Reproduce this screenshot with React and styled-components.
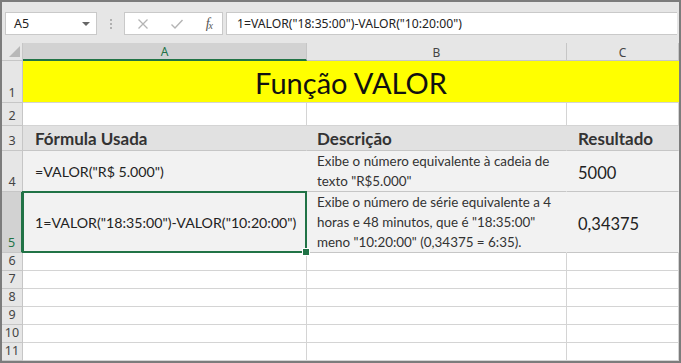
import React from 'react';
import styled, { createGlobalStyle, css } from 'styled-components';

const GlobalStyle = createGlobalStyle`
  html, body { margin: 0; padding: 0; background: #ffffff; }
  * { box-sizing: border-box; }
`;

const GREEN = '#217346';
const GRID = '#d4d4d4';

const rows = [
  { n: 1, h: 42 },
  { n: 2, h: 23 },
  { n: 3, h: 25 },
  { n: 4, h: 41 },
  { n: 5, h: 61, active: true },
  { n: 6, h: 18 },
  { n: 7, h: 18 },
  { n: 8, h: 18 },
  { n: 9, h: 18 },
  { n: 10, h: 18 },
  { n: 11, h: 18 },
];

const App = () => (
  <>
    <GlobalStyle />
    <Window>
      <FormulaBar>
        <NameBox>
          <span>A5</span>
          <DropArrow />
        </NameBox>
        <Grip>
          <i /><i /><i />
        </Grip>
        <ActionBox>
          <svg width="12" height="12" viewBox="0 0 12 12">
            <path d="M1.5 1.5 L10.5 10.5 M10.5 1.5 L1.5 10.5" stroke="#b4b4b4" strokeWidth="1.3" fill="none" />
          </svg>
          <svg width="14" height="12" viewBox="0 0 14 12">
            <path d="M1.5 6.5 L5 10 L12.5 2" stroke="#b4b4b4" strokeWidth="1.4" fill="none" />
          </svg>
          <Fx>f<sub>x</sub></Fx>
        </ActionBox>
        <FormulaInput>1=VALOR("18:35:00")-VALOR("10:20:00")</FormulaInput>
      </FormulaBar>

      <Sheet>
        <Corner>
          <svg width="11" height="11" viewBox="0 0 11 11">
            <path d="M11 0 L11 11 L0 11 Z" fill="#b8b8b8" />
          </svg>
        </Corner>
        <ColHead $active>A</ColHead>
        <ColHead>B</ColHead>
        <ColHead>C</ColHead>

        {rows.map((r) => (
          <React.Fragment key={r.n}>
            <RowHead $h={r.h} $active={r.active}>{r.n}</RowHead>
            {r.n === 1 && <TitleCell>Função VALOR</TitleCell>}
            {r.n === 2 && (<><Cell /><Cell /><Cell /></>)}
            {r.n === 3 && (
              <>
                <HeadCell $pad={12}>Fórmula Usada</HeadCell>
                <HeadCell $pad={10}>Descrição</HeadCell>
                <HeadCell $pad={11}>Resultado</HeadCell>
              </>
            )}
            {r.n === 4 && (
              <>
                <DataCell $pad={12}><Formula>=VALOR("R$ 5.000")</Formula></DataCell>
                <DataCell $pad={10}>
                  <Desc>Exibe o número equivalente à cadeia de<br />texto "R$5.000"</Desc>
                </DataCell>
                <DataCell $pad={11}><Result>5000</Result></DataCell>
              </>
            )}
            {r.n === 5 && (
              <>
                <DataCell $pad={12} $selected>
                  <Formula>1=VALOR("18:35:00")-VALOR("10:20:00")</Formula>
                </DataCell>
                <DataCell $pad={10}>
                  <Desc>
                    Exibe o número de série equivalente a 4<br />
                    horas e 48 minutos, que é "18:35:00"<br />
                    meno "10:20:00" (0,34375 = 6:35).
                  </Desc>
                </DataCell>
                <DataCell $pad={11}><Result>0,34375</Result></DataCell>
              </>
            )}
            {r.n > 5 && (<><Cell /><Cell /><Cell /></>)}
          </React.Fragment>
        ))}
      </Sheet>
    </Window>
  </>
);

export default App;

// ============================================
// STYLES
// ============================================

const Window = styled.div`
  width: 681px;
  height: 363px;
  border: 2px solid #7c7c7c;
  background: #e6e6e6;
  display: flex;
  flex-direction: column;
  overflow: hidden;
  font-family: 'Noto Sans', 'Open Sans', sans-serif;
`;

const FormulaBar = styled.div`
  height: 41px;
  display: flex;
  align-items: flex-start;
  padding: 10px 2px 0 3px;
`;

const boxBase = css`
  height: 23px;
  background: #ffffff;
  border: 1px solid #c9c9c9;
  display: flex;
  align-items: center;
`;

const NameBox = styled.div`
  ${boxBase};
  width: 92px;
  padding: 0 6px 0 8px;
  justify-content: space-between;
  font-size: 12.5px;
  color: #222;
`;

const DropArrow = styled.span`
  width: 0;
  height: 0;
  border-left: 4px solid transparent;
  border-right: 4px solid transparent;
  border-top: 4px solid #666;
`;

const Grip = styled.div`
  width: 27px;
  height: 23px;
  display: flex;
  flex-direction: column;
  align-items: center;
  justify-content: center;
  gap: 2px;

  i {
    width: 2px;
    height: 2px;
    background: #b0b0b0;
  }
`;

const ActionBox = styled.div`
  ${boxBase};
  width: 99px;
  padding: 0 10px 0 12px;
  justify-content: space-between;
`;

const Fx = styled.span`
  font-family: 'Liberation Serif', serif;
  font-style: italic;
  font-size: 14px;
  color: #555;
  letter-spacing: -1px;

  sub {
    font-size: 10px;
    vertical-align: -1px;
  }
`;

const FormulaInput = styled.div`
  ${boxBase};
  flex: 1;
  margin-left: 3px;
  padding-left: 10px;
  font-size: 12.2px;
  color: #222;
  border-right: none;
`;

const Sheet = styled.div`
  flex: 1;
  display: grid;
  grid-template-columns: 21px 284px 260px 1fr;
  grid-template-rows: 18px;
  background: #ffffff;
`;

const Corner = styled.div`
  background: #e6e6e6;
  border-right: 1px solid #c6c6c6;
  border-bottom: 1px solid #c6c6c6;
  display: flex;
  align-items: flex-end;
  justify-content: flex-end;
  padding: 0 2px 3px 0;
`;

const ColHead = styled.div`
  background: ${(p) => (p.$active ? '#d2d2d2' : '#e6e6e6')};
  color: ${(p) => (p.$active ? GREEN : '#444')};
  border-right: 1px solid #c6c6c6;
  border-bottom: ${(p) => (p.$active ? `2px solid ${GREEN}` : '1px solid #c6c6c6')};
  font-size: 12px;
  display: flex;
  align-items: center;
  justify-content: center;
  padding-top: 1px;
`;

const RowHead = styled.div`
  height: ${(p) => p.$h}px;
  background: ${(p) => (p.$active ? '#d2d2d2' : '#e6e6e6')};
  color: ${(p) => (p.$active ? GREEN : '#444')};
  border-right: ${(p) => (p.$active ? `2px solid ${GREEN}` : '1px solid #c6c6c6')};
  border-bottom: 1px solid #c6c6c6;
  font-size: 12.5px;
  display: flex;
  align-items: flex-end;
  justify-content: center;
  padding-bottom: 1px;
  line-height: 16px;
`;

const Cell = styled.div`
  border-right: 1px solid ${GRID};
  border-bottom: 1px solid ${GRID};
  background: #ffffff;
`;

const TitleCell = styled.div`
  grid-column: span 3;
  background: #ffff00;
  border-bottom: 1px solid ${GRID};
  display: flex;
  align-items: center;
  justify-content: center;
  font-family: 'Lato', sans-serif;
  font-size: 29px;
  color: #111;
  padding-top: 2px;
`;

const HeadCell = styled.div`
  background: #e1e1e1;
  border-right: 1px solid #e1e1e1;
  border-bottom: 1px solid #c6c6c6;
  display: flex;
  align-items: center;
  padding-left: ${(p) => p.$pad}px;
  font-family: 'Lato', sans-serif;
  font-weight: 700;
  font-size: 17px;
  color: #333;
  white-space: nowrap;
`;

const DataCell = styled.div`
  position: relative;
  background: #f2f2f2;
  border-right: 1px solid #f2f2f2;
  border-bottom: 1px solid #c6c6c6;
  display: flex;
  align-items: center;
  padding-left: ${(p) => p.$pad}px;
  font-family: 'Lato', sans-serif;
  color: #222;
  white-space: nowrap;

  ${(p) => p.$selected && css`
    &::after {
      content: '';
      position: absolute;
      left: -1px;
      top: -1px;
      right: -1px;
      bottom: -1px;
      border: 2px solid ${GREEN};
      pointer-events: none;
    }
    &::before {
      content: '';
      position: absolute;
      right: -4px;
      bottom: -4px;
      width: 6px;
      height: 6px;
      background: ${GREEN};
      border: 1px solid #ffffff;
      z-index: 2;
    }
  `}
`;

const Formula = styled.span`
  font-size: 14.2px;
`;

const Desc = styled.span`
  font-size: 13.4px;
  line-height: 20px;
  color: #333;
`;

const Result = styled.span`
  font-size: 16.5px;
  padding-top: 3px;
`;
